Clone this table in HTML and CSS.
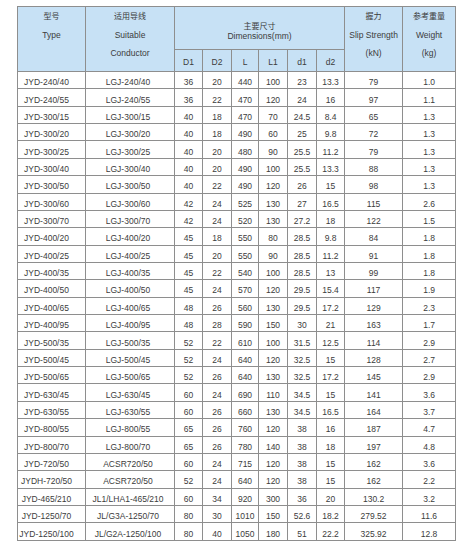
FILE: index.html
```html
<!DOCTYPE html>
<html lang="zh">
<head>
<meta charset="utf-8">
<title>JYD</title>
<link rel="stylesheet" href="styles.css">
</head>
<body>
<table class="spec">
  <colgroup>
    <col class="c-type"><col class="c-cond"><col class="c-d1"><col class="c-d2"><col class="c-l"><col class="c-l1"><col class="c-sd1"><col class="c-sd2"><col class="c-slip"><col class="c-wt">
  </colgroup>
  <thead>
    <tr class="h1">
      <th rowspan="2" class="th-type"><span class="zh">型号</span><br>Type</th>
      <th rowspan="2" class="th-cond"><span class="zh">适用导线</span><br>Suitable<br>Conductor</th>
      <th colspan="6" class="th-dim"><span class="zh">主要尺寸</span><br>Dimensions(mm)</th>
      <th rowspan="2" class="th-slip"><span class="zh">握力</span><br>Slip Strength<br>(kN)</th>
      <th rowspan="2" class="th-wt"><span class="zh">参考重量</span><br>Weight<br>(kg)</th>
    </tr>
    <tr class="h2">
      <th>D1</th><th>D2</th><th>L</th><th>L1</th><th>d1</th><th>d2</th>
    </tr>
  </thead>
  <tbody>
    <tr><td class="t">JYD-240/40</td><td class="c">LGJ-240/40</td><td>36</td><td>20</td><td>440</td><td>100</td><td>23</td><td>13.3</td><td>79</td><td>1.0</td></tr>
    <tr><td class="t">JYD-240/55</td><td class="c">LGJ-240/55</td><td>36</td><td>22</td><td>470</td><td>120</td><td>24</td><td>16</td><td>97</td><td>1.1</td></tr>
    <tr><td class="t">JYD-300/15</td><td class="c">LGJ-300/15</td><td>40</td><td>18</td><td>470</td><td>70</td><td>24.5</td><td>8.4</td><td>65</td><td>1.3</td></tr>
    <tr><td class="t">JYD-300/20</td><td class="c">LGJ-300/20</td><td>40</td><td>18</td><td>490</td><td>60</td><td>25</td><td>9.8</td><td>72</td><td>1.3</td></tr>
    <tr><td class="t">JYD-300/25</td><td class="c">LGJ-300/25</td><td>40</td><td>20</td><td>480</td><td>90</td><td>25.5</td><td>11.2</td><td>79</td><td>1.3</td></tr>
    <tr><td class="t">JYD-300/40</td><td class="c">LGJ-300/40</td><td>40</td><td>20</td><td>490</td><td>100</td><td>25.5</td><td>13.3</td><td>88</td><td>1.3</td></tr>
    <tr><td class="t">JYD-300/50</td><td class="c">LGJ-300/50</td><td>40</td><td>22</td><td>490</td><td>120</td><td>26</td><td>15</td><td>98</td><td>1.3</td></tr>
    <tr><td class="t">JYD-300/60</td><td class="c">LGJ-300/60</td><td>42</td><td>24</td><td>525</td><td>130</td><td>27</td><td>16.5</td><td>115</td><td>2.6</td></tr>
    <tr><td class="t">JYD-300/70</td><td class="c">LGJ-300/70</td><td>42</td><td>24</td><td>520</td><td>130</td><td>27.2</td><td>18</td><td>122</td><td>1.5</td></tr>
    <tr><td class="t">JYD-400/20</td><td class="c">LGJ-400/20</td><td>45</td><td>18</td><td>550</td><td>80</td><td>28.5</td><td>9.8</td><td>84</td><td>1.8</td></tr>
    <tr><td class="t">JYD-400/25</td><td class="c">LGJ-400/25</td><td>45</td><td>20</td><td>550</td><td>90</td><td>28.5</td><td>11.2</td><td>91</td><td>1.8</td></tr>
    <tr><td class="t">JYD-400/35</td><td class="c">LGJ-400/35</td><td>45</td><td>22</td><td>540</td><td>100</td><td>28.5</td><td>13</td><td>99</td><td>1.8</td></tr>
    <tr><td class="t">JYD-400/50</td><td class="c">LGJ-400/50</td><td>45</td><td>24</td><td>570</td><td>120</td><td>29.5</td><td>15.4</td><td>117</td><td>1.9</td></tr>
    <tr><td class="t">JYD-400/65</td><td class="c">LGJ-400/65</td><td>48</td><td>26</td><td>560</td><td>130</td><td>29.5</td><td>17.2</td><td>129</td><td>2.3</td></tr>
    <tr><td class="t">JYD-400/95</td><td class="c">LGJ-400/95</td><td>48</td><td>28</td><td>590</td><td>150</td><td>30</td><td>21</td><td>163</td><td>1.7</td></tr>
    <tr><td class="t">JYD-500/35</td><td class="c">LGJ-500/35</td><td>52</td><td>22</td><td>610</td><td>100</td><td>31.5</td><td>12.5</td><td>114</td><td>2.9</td></tr>
    <tr><td class="t">JYD-500/45</td><td class="c">LGJ-500/45</td><td>52</td><td>24</td><td>640</td><td>120</td><td>32.5</td><td>15</td><td>128</td><td>2.7</td></tr>
    <tr><td class="t">JYD-500/65</td><td class="c">LGJ-500/65</td><td>52</td><td>26</td><td>640</td><td>130</td><td>32.5</td><td>17.2</td><td>145</td><td>2.9</td></tr>
    <tr><td class="t">JYD-630/45</td><td class="c">LGJ-630/45</td><td>60</td><td>24</td><td>690</td><td>110</td><td>34.5</td><td>15</td><td>141</td><td>3.6</td></tr>
    <tr><td class="t">JYD-630/55</td><td class="c">LGJ-630/55</td><td>60</td><td>26</td><td>660</td><td>130</td><td>34.5</td><td>16.5</td><td>164</td><td>3.7</td></tr>
    <tr><td class="t">JYD-800/55</td><td class="c">LGJ-800/55</td><td>65</td><td>26</td><td>760</td><td>120</td><td>38</td><td>16</td><td>187</td><td>4.7</td></tr>
    <tr><td class="t">JYD-800/70</td><td class="c">LGJ-800/70</td><td>65</td><td>26</td><td>780</td><td>140</td><td>38</td><td>18</td><td>197</td><td>4.8</td></tr>
    <tr><td class="t">JYD-720/50</td><td class="c">ACSR720/50</td><td>60</td><td>24</td><td>715</td><td>120</td><td>38</td><td>15</td><td>162</td><td>3.6</td></tr>
    <tr><td class="t">JYDH-720/50</td><td class="c">ACSR720/50</td><td>52</td><td>24</td><td>640</td><td>120</td><td>38</td><td>15</td><td>162</td><td>2.2</td></tr>
    <tr><td class="t">JYD-465/210</td><td class="c">JL1/LHA1-465/210</td><td>60</td><td>34</td><td>920</td><td>300</td><td>36</td><td>20</td><td>130.2</td><td>3.2</td></tr>
    <tr><td class="t">JYD-1250/70</td><td class="c">JL/G3A-1250/70</td><td>80</td><td>30</td><td>1010</td><td>150</td><td>52.6</td><td>18.2</td><td>279.52</td><td>11.6</td></tr>
    <tr><td class="t">JYD-1250/100</td><td class="c">JL/G2A-1250/100</td><td>80</td><td>40</td><td>1050</td><td>180</td><td>51</td><td>22.2</td><td>325.92</td><td>12.8</td></tr>
  </tbody>
</table>
</body>
</html>
```

FILE: styles.css
```css
html, body {
  margin: 0;
  padding: 0;
  background: #ffffff;
}

body {
  font-family: "Liberation Sans", Arial, "Noto Sans CJK SC", sans-serif;
  color: #3c3c3c;
  font-size: 8.5px;
}

.spec {
  border-collapse: collapse;
  table-layout: fixed;
  width: 438px;
  margin: 6px 0 0 17px;
}

.c-type { width: 68px; }
.c-cond { width: 89px; }
.c-d1 { width: 28px; }
.c-d2 { width: 29px; }
.c-l { width: 27px; }
.c-l1 { width: 29px; }
.c-sd1 { width: 29px; }
.c-sd2 { width: 28px; }
.c-slip { width: 58px; }
.c-wt { width: 53px; }

.spec th,
.spec td {
  border: 1px solid #8e8e8e;
  padding: 0;
  text-align: center;
  white-space: nowrap;
  font-weight: normal;
}

.spec th {
  background: #c7e1f5;
  color: #3c3c3c;
}

.zh {
  font-family: "Noto Sans CJK SC", sans-serif;
  font-size: 8px;
}

.h1 { height: 43px; }
.h1 th {
  vertical-align: top;
  line-height: 18.5px;
}

.th-type { padding-top: 17px; padding-right: 10px; }
.th-cond { padding-top: 9px; padding-right: 4px; }
.th-slip { padding-top: 5px; }
.th-wt { padding-top: 8px; }
.h1 .th-dim {
  line-height: 10px;
  padding-top: 14px;
}

.h2 { height: 22px; }
.h2 th {
  vertical-align: middle;
  padding-top: 3px;
  line-height: 10px;
}

.spec tbody tr { height: 17.37px; }
.spec tbody td {
  vertical-align: middle;
  line-height: 10px;
  padding-top: 4px;
}

.spec td.t { padding-right: 10px; }
.spec td.c { padding-right: 4px; }
```
